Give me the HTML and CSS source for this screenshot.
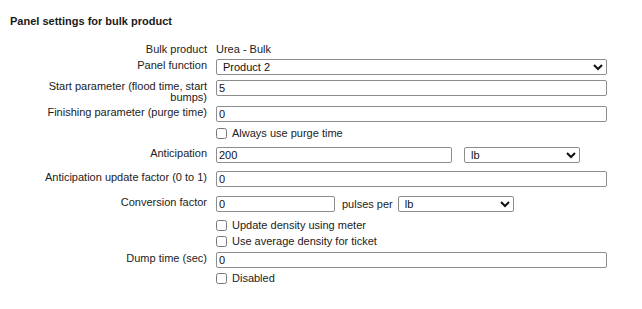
FILE: index.html
```html
<!DOCTYPE html>
<html>
<head>
<meta charset="utf-8">
<link rel="stylesheet" href="styles.css">
</head>
<body>
<div class="page">
  <h1 class="title">Panel settings for bulk product</h1>
  <div class="form">
    <div class="row r-text">
      <div class="lbl">Bulk product</div>
      <div class="ctl"><span class="val">Urea - Bulk</span></div>
    </div>
    <div class="row g3">
      <div class="lbl">Panel function</div>
      <div class="ctl"><select class="sel full"><option>Product 2</option></select></div>
    </div>
    <div class="row g5">
      <div class="lbl">Start parameter (flood time, start bumps)</div>
      <div class="ctl"><input class="inp full" type="text" value="5"></div>
    </div>
    <div class="row g3">
      <div class="lbl">Finishing parameter (purge time)</div>
      <div class="ctl"><input class="inp full" type="text" value="0"></div>
    </div>
    <div class="row g5">
      <div class="lbl"></div>
      <div class="ctl"><label class="chk"><input type="checkbox"><span>Always use purge time</span></label></div>
    </div>
    <div class="row g7">
      <div class="lbl">Anticipation</div>
      <div class="ctl inline">
        <input class="inp w-ant" type="text" value="200">
        <select class="sel w-unit sp12"><option>lb</option></select>
      </div>
    </div>
    <div class="row g8">
      <div class="lbl">Anticipation update factor (0 to 1)</div>
      <div class="ctl"><input class="inp full" type="text" value="0"></div>
    </div>
    <div class="row g9">
      <div class="lbl">Conversion factor</div>
      <div class="ctl inline">
        <input class="inp w-conv" type="text" value="0">
        <span class="txt">pulses per</span>
        <select class="sel w-unit"><option>lb</option></select>
      </div>
    </div>
    <div class="row g7">
      <div class="lbl"></div>
      <div class="ctl"><label class="chk"><input type="checkbox"><span>Update density using meter</span></label></div>
    </div>
    <div class="row g3">
      <div class="lbl"></div>
      <div class="ctl"><label class="chk"><input type="checkbox"><span>Use average density for ticket</span></label></div>
    </div>
    <div class="row g4">
      <div class="lbl">Dump time (sec)</div>
      <div class="ctl"><input class="inp full" type="text" value="0"></div>
    </div>
    <div class="row g4">
      <div class="lbl"></div>
      <div class="ctl"><label class="chk"><input type="checkbox"><span>Disabled</span></label></div>
    </div>
  </div>
</div>
</body>
</html>
```
FILE: styles.css
```css
html, body {
  margin: 0;
  padding: 0;
  background: #ffffff;
}
body {
  font-family: "Liberation Sans", Arial, sans-serif;
  font-size: 11px;
  color: #222222;
}
.page {
  padding: 15px 10px 20px 10px;
}
.title {
  margin: 0;
  font-size: 11px;
  line-height: 13px;
  font-weight: bold;
  color: #1a1a1a;
}
.form {
  display: flex;
  flex-direction: column;
  margin-top: 15px;
}
.row {
  display: flex;
  align-items: flex-start;
}
.g3 { margin-top: 3px; }
.g4 { margin-top: 4px; }
.g5 { margin-top: 5px; }
.g7 { margin-top: 7px; }
.g8 { margin-top: 8px; }
.g9 { margin-top: 9px; }
.lbl {
  width: 165px;
  margin-left: 32px;
  margin-right: 9px;
  text-align: right;
  line-height: 11px;
  margin-top: 1px;
}
.r-text .lbl {
  line-height: 13px;
  margin-top: 0;
}
.ctl {
  display: flex;
  align-items: center;
  line-height: 13px;
}
.val {
  line-height: 13px;
}
.inp {
  box-sizing: border-box;
  height: 16px;
  margin: 0;
  padding: 0 2px;
  border: 1px solid #8d8d8d;
  border-radius: 2px;
  font-family: "Liberation Sans", Arial, sans-serif;
  font-size: 11px;
  color: #111;
  background: #fff;
  outline: none;
}
.sel {
  box-sizing: border-box;
  height: 16px;
  margin: 0;
  padding: 0 0 0 2px;
  border: 1px solid #8d8d8d;
  border-radius: 2px;
  font-family: "Liberation Sans", Arial, sans-serif;
  font-size: 11px;
  color: #111;
  background-color: #fff;
}
.full { width: 391px; }
.w-ant { width: 236px; }
.w-conv { width: 119px; }
.w-unit { width: 116px; }
.sp12 { margin-left: 12px; }
.txt {
  margin: 0 5px 0 7px;
}
.chk {
  display: flex;
  align-items: center;
  height: 13px;
}
.chk input {
  width: 11px;
  height: 11px;
  margin: 0 5px 0 0;
}
```
